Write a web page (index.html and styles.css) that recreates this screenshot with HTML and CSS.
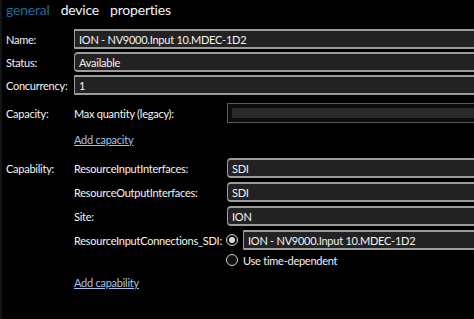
FILE: index.html
```html
<!DOCTYPE html>
<html lang="en">
<head>
  <meta charset="UTF-8">
  <meta name="viewport" content="width=device-width, initial-scale=1.0">
  <title>Resource</title>
  <link rel="stylesheet" href="styles.css">
</head>
<body>
  <div class="tabs">
    <span class="tab active">general</span>
    <span class="tab">device</span>
    <span class="tab">properties</span>
  </div>
  <div class="form">
    <div class="group basics">
      <div class="row">
        <div class="label">Name:</div>
        <div class="field square">ION - NV9000.Input 10.MDEC-1D2</div>
      </div>
      <div class="row">
        <div class="label">Status:</div>
        <div class="field">Available</div>
      </div>
      <div class="row">
        <div class="label">Concurrency:</div>
        <div class="field square">1</div>
      </div>
    </div>

    <div class="group capacity">
      <div class="row">
        <div class="label">Capacity:</div>
        <div class="sub-label">Max quantity (legacy):</div>
        <div class="field disabled"><div class="blur"></div></div>
      </div>
      <div class="row link-row">
        <div class="label"></div>
        <a class="link" href="#">Add capacity</a>
      </div>
    </div>

    <div class="group capability">
      <div class="row">
        <div class="label">Capability:</div>
        <div class="sub-label">ResourceInputInterfaces:</div>
        <div class="field">SDI</div>
      </div>
      <div class="row">
        <div class="label"></div>
        <div class="sub-label">ResourceOutputInterfaces:</div>
        <div class="field">SDI</div>
      </div>
      <div class="row">
        <div class="label"></div>
        <div class="sub-label">Site:</div>
        <div class="field">ION</div>
      </div>
      <div class="row">
        <div class="label"></div>
        <div class="sub-label">ResourceInputConnections_SDI:</div>
        <span class="radio checked"></span>
        <div class="field square">ION - NV9000.Input 10.MDEC-1D2</div>
      </div>
      <div class="row option-row">
        <div class="label"></div>
        <div class="sub-label"></div>
        <span class="radio"></span>
        <span class="option-text">Use time-dependent</span>
      </div>
      <div class="row link-row last">
        <div class="label"></div>
        <a class="link" href="#">Add capability</a>
      </div>
    </div>
  </div>
</body>
</html>
```

FILE: styles.css
```css
* { box-sizing: border-box; margin: 0; padding: 0; }
html, body { width: 474px; height: 319px; overflow: hidden; }
body {
  background-color: #000;
  color: #f4f4f4;
  font-family: Lato, "Noto Sans", sans-serif;
  font-size: 11px;
  letter-spacing: -0.25px;
  border-left: 2px solid #151515;
}

.tabs { display: flex; gap: 11px; padding: 0 0 0 4px; height: 29px; align-items: flex-start; }
.tab { font-size: 14px; color: #f4f4f4; line-height: 20px; letter-spacing: -0.2px; }
.tab.active { color: #1b6aa0; }

.group { display: flex; flex-direction: column; }
.basics { gap: 3px; }
.capacity { margin-top: 8px; gap: 0; }
.capability { margin-top: 11px; gap: 4px; }

.row { display: flex; align-items: center; height: 20px; }
.label { width: 72px; padding-left: 4px; flex: none; white-space: nowrap; }
.sub-label { width: 153px; flex: none; white-space: nowrap; }

.field {
  flex: 1;
  margin-right: -12px;
  height: 20px;
  line-height: 17px;
  padding-left: 4px;
  background: #222;
  border: 2px solid #9c9c9c;
  border-width: 2px 1px;
  border-radius: 4px;
  white-space: nowrap;
}
.field.square { border-radius: 1px; }
.field.disabled { border: 1px solid #5a5a5a; border-radius: 0; background: #0c0c0c; padding: 4px 4px; }
.blur { height: 10px; background: #2a2a2a; }

.link-row { height: 16px; margin-top: 8px; }
.capability .option-row { height: 16px; margin-top: -2px; }
.capability .link-row { margin-top: 2px; }

.link { color: #a6c4e8; text-decoration: underline; }

.radio {
  width: 12px;
  height: 12px;
  flex: none;
  border: 1px solid #cfcfcf;
  border-radius: 50%;
  margin: 0 5px 0 -1px;
  background: #111;
  position: relative;
}
.radio.checked::after {
  content: "";
  position: absolute;
  left: 2px; top: 2px;
  width: 6px; height: 6px;
  border-radius: 50%;
  background: #d8d8d8;
}
```
